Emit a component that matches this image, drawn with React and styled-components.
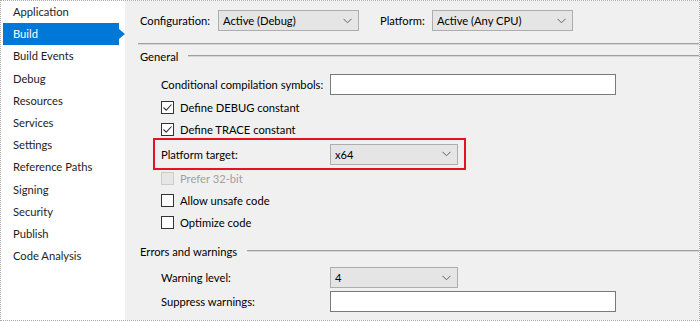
import styled, { createGlobalStyle } from 'styled-components';

const GlobalStyle = createGlobalStyle`
  html, body {
    margin: 0;
    padding: 0;
    background: #ffffff;
  }
  body {
    font-family: Lato, "Liberation Sans", Arial, sans-serif;
    font-size: 11.2px;
    color: #000;
  }
`;

const Frame = styled.div`
  width: 700px;
  height: 321px;
  box-sizing: border-box;
  border: 1px dotted #a8a8a8;
  display: flex;
  overflow: hidden;
  white-space: nowrap;
`;

const Sidebar = styled.ul`
  width: 124px;
  flex: none;
  margin: 0;
  padding: 0;
  list-style: none;
  background: #ffffff;
`;

const NavItem = styled.li`
  position: relative;
  height: 22.2px;
  line-height: 22.2px;
  margin-left: 2px;
  width: 116px;
  padding-left: 10px;
  box-sizing: border-box;
  color: ${(p) => (p.$active ? '#ffffff' : '#1e1e1e')};
  background: ${(p) => (p.$active ? '#0078d7' : 'transparent')};

  &::after {
    content: '';
    display: ${(p) => (p.$active ? 'block' : 'none')};
    position: absolute;
    right: -6px;
    top: 50%;
    margin-top: -5px;
    border-left: 6px solid #0078d7;
    border-top: 5px solid transparent;
    border-bottom: 5px solid transparent;
  }
`;

const Main = styled.div`
  flex: 1;
  background: #f0f0f0;
  padding-left: 13px;
  display: flex;
  flex-direction: column;
`;

const ConfigRow = styled.div`
  display: flex;
  align-items: center;
  margin-top: 9px;
  padding-left: 2px;
  height: 21px;
`;

const ConfigLabel = styled.span`
  width: ${(p) => p.$w}px;
  flex: none;
`;

const Spacer = styled.div`
  width: ${(p) => p.$w}px;
  flex: none;
`;

const Separator = styled.div`
  margin-top: 12px;
  height: 0;
  border-top: 1px solid #a0a0a0;
  border-bottom: 1px solid #d6d6d6;
`;

const SectionHeader = styled.div`
  display: flex;
  align-items: center;
  height: 14px;
  margin-top: ${(p) => p.$mt}px;
  padding-left: 2px;
  gap: 10px;
`;

const SectionLine = styled.div`
  flex: 1;
  height: 0;
  margin-top: -1px;
  border-top: 1px solid #a0a0a0;
  border-bottom: 1px solid #d6d6d6;
`;

const Field = styled.div`
  display: flex;
  align-items: center;
  margin-left: 23px;
  margin-top: ${(p) => p.$mt || 0}px;
`;

const FieldLabel = styled.span`
  width: 169px;
  flex: none;
`;

const Select = styled.div`
  width: ${(p) => p.$w}px;
  height: 21px;
  box-sizing: border-box;
  border: 1px solid #adadad;
  background: #e5e5e5;
  display: flex;
  align-items: center;
  justify-content: space-between;
  padding: 0 6px 0 4px;
  flex: none;
`;

const TextBox = styled.div`
  width: 286px;
  height: 21px;
  box-sizing: border-box;
  border: 1px solid #7a7a7a;
  background: #ffffff;
  flex: none;
`;

const CheckRow = styled.label`
  display: flex;
  align-items: center;
  gap: 6px;
  height: 16px;
  margin-left: 23px;
  margin-top: ${(p) => p.$mt || 0}px;
  color: ${(p) => (p.$disabled ? '#a0a0a0' : '#000')};
`;

const Box = styled.span`
  width: 13px;
  height: 13px;
  box-sizing: border-box;
  border: 1px solid ${(p) => (p.$disabled ? '#cccccc' : '#333333')};
  background: ${(p) => (p.$disabled ? '#e6e6e6' : '#ffffff')};
  display: flex;
  align-items: center;
  justify-content: center;
  flex: none;
`;

const Highlight = styled.div`
  margin-left: 15px;
  margin-top: 1px;
  width: 313px;
  height: 32px;
  box-sizing: border-box;
  border: 2px solid #e81123;
  display: flex;
  align-items: center;
  padding-left: 6px;
`;

function Chevron() {
  return (
    <svg width="9" height="6" viewBox="0 0 9 6">
      <polyline points="0.5,0.8 4.5,4.8 8.5,0.8" fill="none" stroke="#606060" strokeWidth="1" />
    </svg>
  );
}

function Dropdown({ width, value }) {
  return (
    <Select $w={width}>
      <span>{value}</span>
      <Chevron />
    </Select>
  );
}

function Checkbox({ checked, disabled, children, mt }) {
  return (
    <CheckRow $disabled={disabled} $mt={mt}>
      <Box $disabled={disabled}>
        {checked && (
          <svg width="11" height="11" viewBox="0 0 11 11">
            <polyline points="1.5,5.5 4.2,8.2 9.5,2.5" fill="none" stroke="#333" strokeWidth="1.1" />
          </svg>
        )}
      </Box>
      <span>{children}</span>
    </CheckRow>
  );
}

const navItems = [
  'Application',
  'Build',
  'Build Events',
  'Debug',
  'Resources',
  'Services',
  'Settings',
  'Reference Paths',
  'Signing',
  'Security',
  'Publish',
  'Code Analysis',
];

export default function App() {
  return (
    <>
      <GlobalStyle />
      <Frame>
        <Sidebar>
          {navItems.map((item) => (
            <NavItem key={item} $active={item === 'Build'}>
              {item}
            </NavItem>
          ))}
        </Sidebar>
        <Main>
          <ConfigRow>
            <ConfigLabel $w={78}>Configuration:</ConfigLabel>
            <Dropdown width={141} value="Active (Debug)" />
            <Spacer $w={21} />
            <ConfigLabel $w={52}>Platform:</ConfigLabel>
            <Dropdown width={141} value="Active (Any CPU)" />
          </ConfigRow>
          <Separator />

          <SectionHeader $mt={4}>
            <span>General</span>
            <SectionLine />
          </SectionHeader>
          <Field $mt={11}>
            <FieldLabel>Conditional compilation symbols:</FieldLabel>
            <TextBox />
          </Field>
          <Checkbox checked mt={4}>Define DEBUG constant</Checkbox>
          <Checkbox checked mt={6}>Define TRACE constant</Checkbox>
          <Highlight>
            <FieldLabel>Platform target:</FieldLabel>
            <Dropdown width={128} value="x64" />
          </Highlight>
          <Checkbox disabled mt={0}>Prefer 32-bit</Checkbox>
          <Checkbox mt={6}>Allow unsafe code</Checkbox>
          <Checkbox mt={6}>Optimize code</Checkbox>

          <SectionHeader $mt={14}>
            <span>Errors and warnings</span>
            <SectionLine />
          </SectionHeader>
          <Field $mt={9}>
            <FieldLabel>Warning level:</FieldLabel>
            <Dropdown width={128} value="4" />
          </Field>
          <Field $mt={3}>
            <FieldLabel>Suppress warnings:</FieldLabel>
            <TextBox />
          </Field>
        </Main>
      </Frame>
    </>
  );
}
